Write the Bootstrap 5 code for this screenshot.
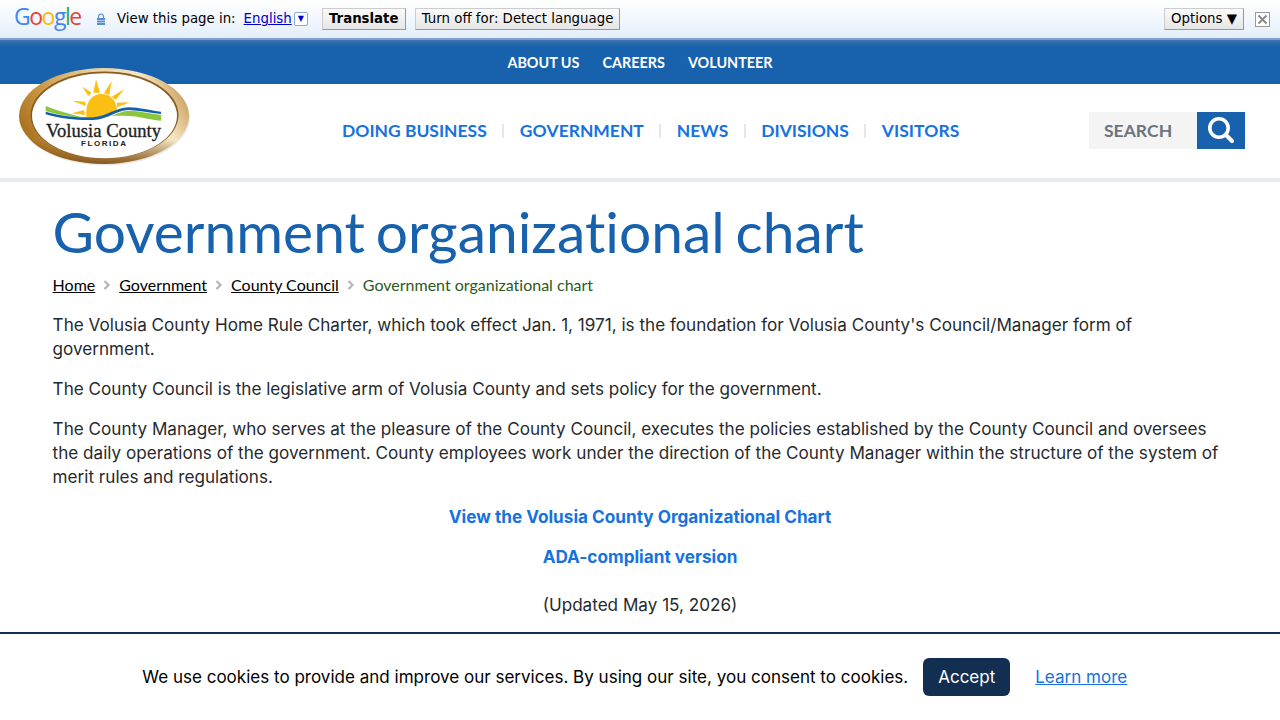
<!DOCTYPE html>
<html lang="en">
<head>
<meta charset="utf-8">
<title>Government organizational chart</title>
<link href="https://cdn.jsdelivr.net/npm/bootstrap@5.3.0/dist/css/bootstrap.min.css" rel="stylesheet">
<style>
html,body{height:720px;overflow:hidden}
body{font-family:Inter,"Liberation Sans",sans-serif;font-size:17.11px;line-height:24px;color:#262a2e;background:#fff}
.gt-bar{height:40px;background:linear-gradient(#fff 0,#e4effb 100%);border-bottom:2px solid #7f9ed6;font-family:"DejaVu Sans",sans-serif;font-size:13.33px;color:#000;padding:0 10px 0 14px}
.gt-logo{font-family:"Open Sans","Liberation Sans",Arial,sans-serif;font-size:23px;letter-spacing:-1.500px;width:68px;line-height:1;margin-top:-6px}
.gt-logo b{font-weight:400}
.gt-lock{margin-left:14px;margin-right:11px}
.gt-label{margin-right:8px}
.gt-link{color:#00c;text-decoration:underline}
.gt-drop{width:14px;height:14px;border:1px solid #88a9de;border-radius:2px;font-size:8px;line-height:12px;text-align:center;color:#00c;background:#fff;margin-left:2px;margin-right:14px}
.gt-btn{height:22px;padding:0 6px;border:1px solid #ccc;border-right-color:#999;border-bottom-color:#999;background:linear-gradient(#fafafa,#e6e6e6);font-family:"DejaVu Sans",sans-serif;font-size:13.33px;line-height:20px;color:#000;border-radius:0}
.gt-wide{width:84px;padding:0}
.gt-gap{margin-right:9px}
.gt-optgap{margin-right:11px}
.gt-close{width:15px;height:15px;border:1px solid #999;background:#fff}
.gt-close svg{display:block}
.topstrip{height:44px;padding-top:2px;background:linear-gradient(#3f73a8 0,#1761ad 7px,#1761ad 100%);font-family:Lato,sans-serif;font-weight:700;font-size:14.4px;gap:23px}
.topstrip a{color:#fff;text-decoration:none}
.mainhead{height:98px;border-bottom:4px solid #e9ecef;padding-right:35px;font-family:Lato,sans-serif;font-variant-ligatures:none;font-kerning:none}
.logo-pic{position:absolute;left:18px;top:67px;width:173px;height:100px}
.mainnav{margin-left:342px;font-size:17.47px;font-weight:700}
.mainnav a{color:#1572e0;text-decoration:none}
.mainnav .bar-sep{width:2px;height:14px;background:#e2e8ee;margin:0 15.5px}
.searchwrap{margin-bottom:2px}
.searchbox{width:108px;height:37px;background:#f4f4f4;color:#6c757d;font-size:17.5px;font-weight:700;padding-left:15px;line-height:37px}
.searchbtn{width:48px;height:37px;background:#1761ad}
.pagebody{padding:0 52.6px}
.pagetitle{font-family:Lato,sans-serif;font-variant-ligatures:none;word-spacing:-3.700px;font-weight:400;font-size:56.9px;line-height:67px;color:#1761ad;margin:16px 0 8px}
.crumbs{font-family:Lato,sans-serif;font-variant-ligatures:none;font-size:16px;line-height:24px;margin-bottom:16px;list-style:none;padding:0}
.crumbs a{color:#000;text-decoration:underline}
.crumbs .here{color:#2b5a21}
.crumbs svg{display:block;margin:0 8px}
.pagebody p{margin-bottom:16px}
.strong-link{color:#1572e0;font-weight:700;font-size:17.17px;text-decoration:none}
.updated{margin-top:24px}
.cookiebar{position:fixed;left:0;right:0;bottom:0;height:88px;padding-right:10.5px;background:#fff;border-top:2px solid #122e50;gap:15px;color:#000;font-size:17.05px}
.cookie-btn{background:#122e50;color:#fff;border:0;border-radius:6px;height:38px;width:87px;font-size:17.05px;padding:0;line-height:38px}
.cookie-link{color:#1572e0;margin-left:10px}
</style>
</head>
<body>
<div class="gt-bar d-flex align-items-center">
  <div class="gt-logo"><b style="color:#4285f4">G</b><b style="color:#ea4335">o</b><b style="color:#fbbc05">o</b><b style="color:#4285f4">g</b><b style="color:#34a853">l</b><b style="color:#ea4335">e</b></div>
  <svg class="gt-lock" width="10" height="12" viewBox="0 0 10 12"><path d="M2.500 5V3.500a2.500 2.500 0 0 1 5 0V5" fill="none" stroke="#5b8fd5" stroke-width="1.200"/><rect x="1" y="5" width="8" height="7" fill="#5b8fd5"/><path d="M1 7.500h8M1 9.500h8" stroke="#bcd2ee" stroke-width=".8"/></svg>
  <span class="gt-label">View this page in:</span>
  <span class="gt-link">English</span><span class="gt-drop">▼</span>
  <button class="gt-btn gt-wide fw-bold gt-gap" type="button">Translate</button>
  <button class="gt-btn" type="button">Turn off for: Detect language</button>
  <button class="gt-btn ms-auto gt-optgap" type="button">Options ▼</button>
  <div class="gt-close"><svg width="13" height="13" viewBox="0 0 13 13"><path d="M2.500 2.500l8 8M10.500 2.500l-8 8" stroke="#8a8a8a" stroke-width="2"/></svg></div>
</div>
<div class="topstrip d-flex align-items-center justify-content-center">
  <a href="#">ABOUT US</a><a href="#">CAREERS</a><a href="#">VOLUNTEER</a>
</div>
<svg class="logo-pic" viewBox="0 0 173 100" role="img" aria-label="Volusia County Florida">
  <defs>
    <linearGradient id="gold" x1="0" y1=".6" x2="1" y2=".3">
      <stop offset="0" stop-color="#a8701f"/><stop offset=".2" stop-color="#c8953f"/><stop offset=".55" stop-color="#e8cf9c"/><stop offset=".8" stop-color="#f5e6c4"/><stop offset="1" stop-color="#c89a55"/>
    </linearGradient>
    <linearGradient id="goldshade" x1="0" y1="0" x2="0" y2="1">
      <stop offset="0" stop-color="#7a4a14" stop-opacity="0"/><stop offset=".75" stop-color="#7a4a14" stop-opacity="0"/><stop offset="1" stop-color="#7a4a14" stop-opacity=".85"/>
    </linearGradient>
  </defs>
  <ellipse cx="87" cy="50.500" rx="85" ry="48" fill="#c9c9c9" opacity=".4"/>
  <ellipse cx="86" cy="49" rx="85" ry="48" fill="url(#gold)"/>
  <ellipse cx="86" cy="49" rx="85" ry="48" fill="url(#goldshade)"/>
  <ellipse cx="86.500" cy="48" rx="74" ry="43.500" fill="#8a5a1f"/>
  <ellipse cx="86.500" cy="48.800" rx="72.500" ry="42.500" fill="#fff"/>
  <g fill="#fbbf14">
    <path d="M78 12.300L75.300 25.700H82zM93.700 14L86 26.300L91.300 28zM106 22.300L93.700 29.700L97.700 33zM112 35.300L98.700 35.700L99.300 40.300zM64.300 19.700L70.300 29L73.700 25.700zM53.700 33.700L67 34.700L68 39zM53.700 46.300L66 43L67 48z"/>
    <path d="M68.500 50C67 34 75 27 83.500 27C92 27 99 33 99 44C92 46 85 51 75 50.300Z"/>
  </g>
  <path d="M27.700 39C40 44 52 47 64 50.300C50 50 40 47.500 27.700 44Z" fill="#8cc63f"/>
  <path d="M93.700 49C100 46 105 44 110.300 43.700C122 44 132 46.500 143 48V53.700C130 52.500 120 49 110.300 49C105 49 100 48.500 93.700 49Z" fill="#8cc63f"/>
  <path d="M27.700 44.700C45 50 60 50.500 75 50.300C90 49 98 40.500 110.300 40.300C122 40.500 132 43.500 143 44.700V47C132 46 122 43.500 110.300 43C98 43.500 90 52.500 75 53C60 53.500 45 52 27.700 47.300Z" fill="#155fa8"/>
  <text x="28" y="70" font-family="Liberation Serif,serif" font-size="18" fill="#222" stroke="#222" stroke-width=".3" textLength="115" lengthAdjust="spacingAndGlyphs">Volusia County</text>
  <text x="63" y="79" font-family="Liberation Sans,sans-serif" font-size="8" font-weight="700" fill="#222" textLength="45">FLORIDA</text>
</svg>
<header class="mainhead d-flex align-items-center">
  <nav class="mainnav d-flex align-items-center">
    <a href="#">DOING BUSINESS</a><span class="bar-sep"></span><a href="#">GOVERNMENT</a><span class="bar-sep"></span><a href="#">NEWS</a><span class="bar-sep"></span><a href="#">DIVISIONS</a><span class="bar-sep"></span><a href="#">VISITORS</a>
  </nav>
  <div class="d-flex ms-auto searchwrap">
    <div class="searchbox">SEARCH</div>
    <div class="searchbtn d-flex align-items-center justify-content-center">
      <svg width="26" height="26" viewBox="0 0 26 26"><circle cx="11" cy="11" r="9.200" fill="none" stroke="#fff" stroke-width="3.600"/><path d="M18 18l6 6" stroke="#fff" stroke-width="4" stroke-linecap="round"/></svg>
    </div>
  </div>
</header>
<main class="pagebody">
  <h1 class="pagetitle">Government organizational chart</h1>
  <ul class="crumbs d-flex align-items-center">
    <li><a href="#">Home</a></li>
    <li><svg width="8" height="10" viewBox="0 0 8 10"><path d="M1.500 1l4 4-4 4" fill="none" stroke="#b5b5b5" stroke-width="2.200"/></svg></li>
    <li><a href="#">Government</a></li>
    <li><svg width="8" height="10" viewBox="0 0 8 10"><path d="M1.500 1l4 4-4 4" fill="none" stroke="#b5b5b5" stroke-width="2.200"/></svg></li>
    <li><a href="#">County Council</a></li>
    <li><svg width="8" height="10" viewBox="0 0 8 10"><path d="M1.500 1l4 4-4 4" fill="none" stroke="#b5b5b5" stroke-width="2.200"/></svg></li>
    <li class="here">Government organizational chart</li>
  </ul>
  <p>The Volusia County Home Rule Charter, which took effect Jan. 1, 1971, is the foundation for Volusia County's Council/Manager form of government.</p>
  <p>The County Council is the legislative arm of Volusia County and sets policy for the government.</p>
  <p>The County Manager, who serves at the pleasure of the County Council, executes the policies established by the County Council and oversees the daily operations of the government. County employees work under the direction of the County Manager within the structure of the system of merit rules and regulations.</p>
  <p class="text-center"><a class="strong-link" href="#">View the Volusia County Organizational Chart</a></p>
  <p class="text-center"><a class="strong-link" href="#">ADA-compliant version</a></p>
  <p class="text-center updated">(Updated May 15, 2026)</p>
</main>
<div class="cookiebar d-flex align-items-center justify-content-center">
  <span>We use cookies to provide and improve our services. By using our site, you consent to cookies.</span>
  <button class="cookie-btn" type="button">Accept</button>
  <a class="cookie-link" href="#">Learn more</a>
</div>
<script src="https://cdn.jsdelivr.net/npm/bootstrap@5.3.0/dist/js/bootstrap.bundle.min.js"></script>
</body>
</html>
